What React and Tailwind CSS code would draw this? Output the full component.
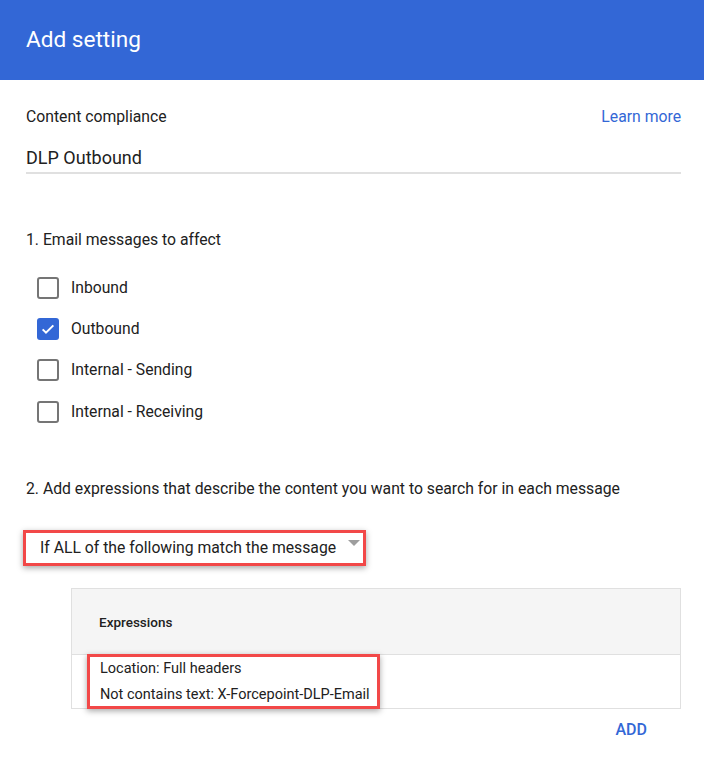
import React from 'react';

const options = [
  { label: 'Inbound', checked: false },
  { label: 'Outbound', checked: true },
  { label: 'Internal - Sending', checked: false },
  { label: 'Internal - Receiving', checked: false },
];

const Checkbox = ({ checked }) =>
  checked ? (
    <div className="w-[22px] h-[22px] rounded-[3px] bg-[#3367d6] flex items-center justify-center">
      <svg width="16" height="16" viewBox="0 0 24 24" fill="none">
        <path d="M4 12.5l5 5L20 6.5" stroke="white" strokeWidth="3" />
      </svg>
    </div>
  ) : (
    <div className="w-[22px] h-[22px] rounded-[3px] border-2 border-[#757575] bg-white"></div>
  );

const App = () => {
  return (
    <div className="w-[704px] h-[757px] bg-white text-[#212121] font-['Roboto',sans-serif] overflow-hidden">
      {/* Header */}
      <div className="h-[80px] bg-[#3367d6] flex items-center px-[26px]">
        <h1 className="text-[22.6px] text-white">Add setting</h1>
      </div>

      <div className="px-[26px] pr-[23px]">
        <div className="mt-[27px] flex justify-between items-center h-[20px]">
          <span className="text-[15.75px]">Content compliance</span>
          <span className="text-[15.75px] text-[#3367d6]">Learn more</span>
        </div>

        <div className="mt-[19px] pb-[2px] border-b-2 border-[#e0e0e0]">
          <div className="text-[18px] leading-[24px]">DLP Outbound</div>
        </div>

        {/* Section 1 */}
        <div className="mt-[56px] text-[15.75px] leading-[20px]">1. Email messages to affect</div>
        <div className="mt-[17px] flex flex-col">
          {options.map((o) => (
            <label key={o.label} className="h-[41.3px] flex items-center pl-[11px] gap-[12px]">
              <Checkbox checked={o.checked} />
              <span className="text-[15.7px]">{o.label}</span>
            </label>
          ))}
        </div>

        {/* Section 2 */}
        <div className="mt-[47px] text-[15.75px] leading-[20px]">
          2. Add expressions that describe the content you want to search for in each message
        </div>

        <div className="mt-[31px] -ml-[3px] w-[343px] h-[36px] border-[3px] border-[#f24848] bg-white shadow-[0_2px_6px_rgba(0,0,0,0.35)] flex items-center justify-between pl-[14px] pr-[3px]">
          <span className="text-[15.75px]">If ALL of the following match the message</span>
          <svg width="12" height="12" viewBox="0 0 12 12" className="-mt-[10px]">
            <path d="M0 3h12L6 9z" fill="#9e9e9e" />
          </svg>
        </div>

        {/* Expressions table */}
        <div className="mt-[22px] ml-[45px] border border-[#e0e0e0]">
          <div className="h-[66px] bg-[#f5f5f5] border-b border-[#e0e0e0] flex items-center pl-[27px]">
            <span className="text-[13.5px] font-medium">Expressions</span>
          </div>
          <div className="h-[54px] pl-[15px]">
            <div className="-mt-px w-[293px] h-[55px] border-[3px] border-[#f24848] shadow-[0_2px_6px_rgba(0,0,0,0.35)] bg-white flex flex-col justify-center pl-[10px] gap-[6px] text-[14.5px]">
              <span className="leading-[20px]">Location: Full headers</span>
              <span className="leading-[20px]">Not contains text: X-Forcepoint-DLP-Email</span>
            </div>
          </div>
        </div>

        <div className="mt-[9px] flex justify-end pr-[34px]">
          <span className="text-[16px] font-medium text-[#3367d6]">ADD</span>
        </div>
      </div>
    </div>
  );
};

export default App;
